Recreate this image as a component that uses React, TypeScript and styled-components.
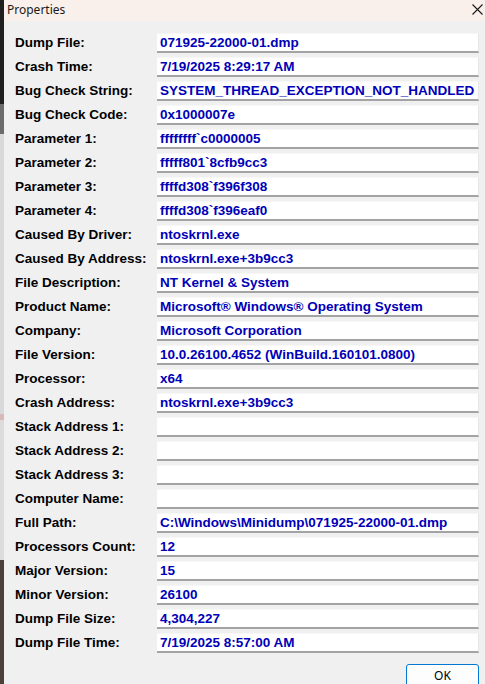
import React from "react";
import styled, { createGlobalStyle } from "styled-components";

const Global = createGlobalStyle`
  html, body { margin: 0; padding: 0; background: #f0f0f0; }
  body { width: 485px; height: 684px; overflow: hidden; }
  * { box-sizing: border-box; }
`;

const Page = styled.div`
  display: flex;
  width: 485px;
  height: 684px;
  overflow: hidden;
`;

const Strip = styled.div`
  width: 4px;
  display: flex;
  flex-direction: column;
  flex: none;
`;

const StripPart = styled.div<{ $h: number; $c: string }>`
  height: ${(p) => p.$h}px;
  background: ${(p) => p.$c};
  flex: none;
`;

const Window = styled.div`
  flex: 1;
  display: flex;
  flex-direction: column;
  background: #f0f0f0;
  min-width: 0;
`;

const TitleBar = styled.div`
  height: 21px;
  background: #f9f0eb;
  display: flex;
  align-items: center;
  justify-content: space-between;
  padding: 0 2px 0 3px;
  flex: none;
`;

const Title = styled.span`
  font-family: "Segoe UI", "Noto Sans", "Open Sans", sans-serif;
  font-size: 12px;
  color: #1a1a1a;
  line-height: 1;
  margin-top: -1px;
`;

const Close = styled.div`
  width: 12px;
  height: 12px;
  display: flex;
  align-items: center;
  justify-content: center;
  margin-top: -3px;
`;

const Body = styled.div`
  display: grid;
  grid-template-columns: 142px 322px;
  row-gap: 4px;
  padding: 12px 0 0 11px;
`;

const Label = styled.div`
  font-family: "Liberation Sans", Arial, sans-serif;
  font-weight: bold;
  font-size: 13.5px;
  color: #000;
  height: 20px;
  line-height: 19px;
  white-space: nowrap;
`;

const Value = styled.div`
  font-family: "Liberation Sans", Arial, sans-serif;
  font-weight: bold;
  font-size: 13.5px;
  color: #0000b8;
  height: 20px;
  line-height: 18px;
  padding-left: 3px;
  background: #ffffff;
  border-top: 1px solid #f7f7f7;
  border-right: 1px solid #e6e6e6;
  border-bottom: 2px solid #a3a3a3;
  white-space: nowrap;
  overflow: hidden;
`;

const Footer = styled.div`
  display: flex;
  justify-content: flex-end;
  padding: 11px 6px 0 0;
`;

const OkButton = styled.button`
  width: 73px;
  height: 23px;
  border: 1px solid #0078d4;
  border-radius: 3px;
  background: #fdfdfd;
  font-family: "Segoe UI", "Noto Sans", "Open Sans", sans-serif;
  font-size: 12px;
  color: #000;
  padding: 0;
  box-shadow: inset 0 0 0 1px #ffffff;
`;

const rows: [string, string][] = [
  ["Dump File:", "071925-22000-01.dmp"],
  ["Crash Time:", "7/19/2025 8:29:17 AM"],
  ["Bug Check String:", "SYSTEM_THREAD_EXCEPTION_NOT_HANDLED"],
  ["Bug Check Code:", "0x1000007e"],
  ["Parameter 1:", "ffffffff`c0000005"],
  ["Parameter 2:", "fffff801`8cfb9cc3"],
  ["Parameter 3:", "ffffd308`f396f308"],
  ["Parameter 4:", "ffffd308`f396eaf0"],
  ["Caused By Driver:", "ntoskrnl.exe"],
  ["Caused By Address:", "ntoskrnl.exe+3b9cc3"],
  ["File Description:", "NT Kernel & System"],
  ["Product Name:", "Microsoft® Windows® Operating System"],
  ["Company:", "Microsoft Corporation"],
  ["File Version:", "10.0.26100.4652 (WinBuild.160101.0800)"],
  ["Processor:", "x64"],
  ["Crash Address:", "ntoskrnl.exe+3b9cc3"],
  ["Stack Address 1:", ""],
  ["Stack Address 2:", ""],
  ["Stack Address 3:", ""],
  ["Computer Name:", ""],
  ["Full Path:", "C:\\Windows\\Minidump\\071925-22000-01.dmp"],
  ["Processors Count:", "12"],
  ["Major Version:", "15"],
  ["Minor Version:", "26100"],
  ["Dump File Size:", "4,304,227"],
  ["Dump File Time:", "7/19/2025 8:57:00 AM"],
];

const strip: [number, string][] = [
  [104, "#1f1f1f"],
  [30, "#6b6b6b"],
  [280, "#d9d9d9"],
  [6, "#d8b8b8"],
  [140, "#dcdcdc"],
  [124, "#4d4038"],
];

export default function App() {
  return (
    <>
      <Global />
      <Page>
        <Strip>
          {strip.map(([h, c], i) => (
            <StripPart key={i} $h={h} $c={c} />
          ))}
        </Strip>
        <Window>
          <TitleBar>
            <Title>Properties</Title>
            <Close>
              <svg width="11" height="11" viewBox="0 0 11 11">
                <path d="M0.5 0.5 L10.5 10.5 M10.5 0.5 L0.5 10.5" stroke="#1a1a1a" strokeWidth="1.1" fill="none" />
              </svg>
            </Close>
          </TitleBar>
          <Body>
            {rows.map(([l, v]) => (
              <React.Fragment key={l}>
                <Label>{l}</Label>
                <Value>{v}</Value>
              </React.Fragment>
            ))}
          </Body>
          <Footer>
            <OkButton>OK</OkButton>
          </Footer>
        </Window>
      </Page>
    </>
  );
}
